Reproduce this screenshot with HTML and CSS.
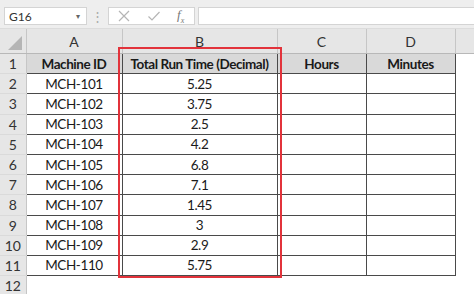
FILE: index.html
```html
<!DOCTYPE html>
<html>
<head>
<meta charset="utf-8">
<link rel="stylesheet" href="styles.css">
</head>
<body>
<div class="app">
  <div class="toolbar">
    <div class="namebox"><span class="nm">G16</span><span class="caret">&#9662;</span></div>
    <div class="dots">&#8942;</div>
    <div class="fxbox">
      <svg class="ic" width="14" height="14" viewBox="0 0 14 14"><path d="M2 2 L12 12 M12 2 L2 12" stroke="#b5b5b5" stroke-width="1.2" fill="none"/></svg>
      <svg class="ic" width="14" height="14" viewBox="0 0 14 14"><path d="M1.5 7.5 L5 11 L12.5 3" stroke="#b5b5b5" stroke-width="1.2" fill="none"/></svg>
      <span class="fx">f<sub>x</sub></span>
    </div>
    <div class="formula"></div>
  </div>
  <div class="sheet">
    <table class="grid">
      <colgroup>
        <col class="c0"><col class="ca"><col class="cb"><col class="cc"><col class="cd"><col class="ce">
      </colgroup>
      <tr class="colhdr">
        <th class="corner"><span class="tri"></span></th><th>A</th><th>B</th><th>C</th><th>D</th><th class="rest"></th>
      </tr>
      <tr class="r"><th class="rh">1</th><td class="h">Machine ID</td><td class="h">Total Run Time (Decimal)</td><td class="h">Hours</td><td class="h">Minutes</td><td class="e"></td></tr>
      <tr class="r"><th class="rh">2</th><td>MCH-101</td><td>5.25</td><td></td><td></td><td class="e"></td></tr>
      <tr class="r"><th class="rh">3</th><td>MCH-102</td><td>3.75</td><td></td><td></td><td class="e"></td></tr>
      <tr class="r"><th class="rh">4</th><td>MCH-103</td><td>2.5</td><td></td><td></td><td class="e"></td></tr>
      <tr class="r"><th class="rh">5</th><td>MCH-104</td><td>4.2</td><td></td><td></td><td class="e"></td></tr>
      <tr class="r"><th class="rh">6</th><td>MCH-105</td><td>6.8</td><td></td><td></td><td class="e"></td></tr>
      <tr class="r"><th class="rh">7</th><td>MCH-106</td><td>7.1</td><td></td><td></td><td class="e"></td></tr>
      <tr class="r"><th class="rh">8</th><td>MCH-107</td><td>1.45</td><td></td><td></td><td class="e"></td></tr>
      <tr class="r"><th class="rh">9</th><td>MCH-108</td><td>3</td><td></td><td></td><td class="e"></td></tr>
      <tr class="r"><th class="rh">10</th><td>MCH-109</td><td>2.9</td><td></td><td></td><td class="e"></td></tr>
      <tr class="r"><th class="rh">11</th><td>MCH-110</td><td>5.75</td><td></td><td></td><td class="e"></td></tr>
      <tr class="r last"><th class="rh">12</th><td class="e"></td><td class="e"></td><td class="e"></td><td class="e"></td><td class="e"></td></tr>
    </table>
    <div class="redbox"></div>
  </div>
</div>
</body>
</html>
```

FILE: styles.css
```css
html, body {
  margin: 0;
  padding: 0;
  background: #ffffff;
}
.app {
  width: 474px;
  height: 294px;
  overflow: hidden;
  font-family: "Lato", "Open Sans", sans-serif;
  color: #1a1a1a;
}
.toolbar {
  height: 29px;
  background: #eeeeee;
  display: flex;
  align-items: flex-start;
  padding-top: 7px;
  box-sizing: border-box;
  border-bottom: 1px solid #dcdcdc;
}
.namebox {
  margin-left: 4px;
  width: 83px;
  height: 18px;
  background: #fff;
  border: 1px solid #d4d4d4;
  box-sizing: border-box;
  display: flex;
  align-items: center;
  justify-content: space-between;
  padding: 0 6px 0 4px;
  font-size: 12px;
  color: #333;
}
.caret {
  font-size: 8px;
  color: #666;
}
.dots {
  width: 21px;
  text-align: center;
  color: #aaa;
  font-size: 13px;
  line-height: 18px;
}
.fxbox {
  width: 87px;
  height: 18px;
  background: #fff;
  border: 1px solid #d4d4d4;
  box-sizing: border-box;
  display: flex;
  align-items: center;
  gap: 16px;
  padding-left: 8px;
}
.fx {
  font-family: "Liberation Serif", serif;
  font-style: italic;
  font-size: 13px;
  color: #777;
  line-height: 1;
}
.fx sub {
  font-size: 8px;
}
.formula {
  margin-left: 3px;
  flex: 1;
  height: 18px;
  background: #fff;
  border: 1px solid #d4d4d4;
  border-right: none;
  box-sizing: border-box;
}
.sheet {
  position: relative;
}
.grid {
  border-collapse: collapse;
  table-layout: fixed;
  width: 520px;
}
.c0 { width: 26px; }
.ca { width: 96px; }
.cb { width: 155px; }
.cc { width: 89px; }
.cd { width: 89px; }
.ce { width: 65px; }
.colhdr th {
  height: 22px;
  background: #e6e6e6;
  font-weight: normal;
  font-size: 14px;
  color: #333;
  border-right: 1px solid #c6c6c6;
  border-bottom: 1px solid #b8b8b8;
  padding: 0;
  padding-top: 2px;
  vertical-align: middle;
  line-height: 16px;
}
.colhdr th.rest {
  border-right: none;
}
.corner {
  position: relative;
}
.tri {
  position: absolute;
  right: 4px;
  bottom: 3px;
  width: 0;
  height: 0;
  border-left: 14px solid transparent;
  border-bottom: 14px solid #b5b5b5;
}
.r {
  height: 20.2px;
}
.r th.rh {
  background: #e6e6e6;
  font-weight: normal;
  font-size: 14px;
  color: #333;
  border-right: 1px solid #c6c6c6;
  border-bottom: 1px solid #dadada;
  padding: 0;
  text-align: center;
}
.r td {
  border: 1px solid #4a4a4a;
  padding: 0;
  font-size: 13.5px;
  letter-spacing: -0.4px;
  text-align: center;
  line-height: 18px;
  white-space: nowrap;
  overflow: hidden;
}
.r td.h {
  background: #d9d9d9;
  font-weight: bold;
  letter-spacing: -0.45px;
}
.r td.e {
  border: none;
  background: #fff;
}
.redbox {
  position: absolute;
  left: 118px;
  top: 18px;
  width: 164px;
  height: 231px;
  border: 2px solid #e2333b;
  box-sizing: border-box;
}
```
